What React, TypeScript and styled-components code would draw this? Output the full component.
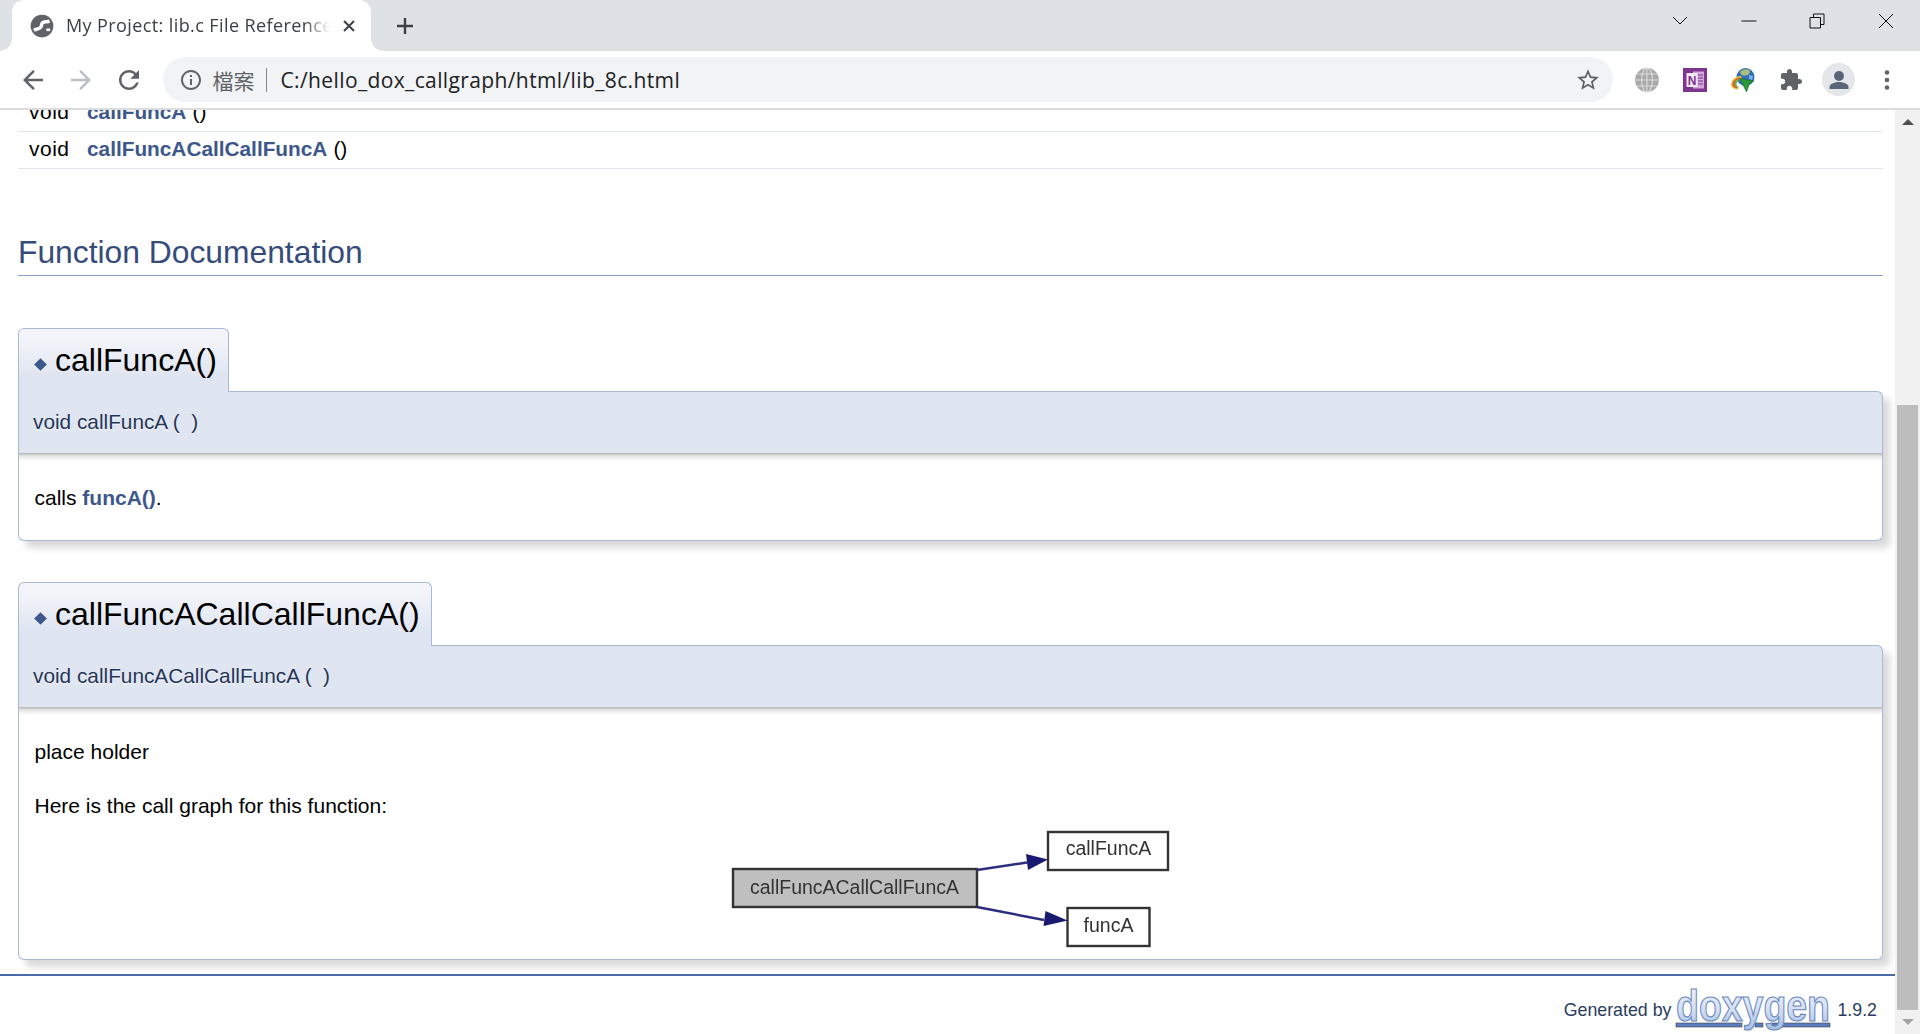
import React from "react";
import styled, { createGlobalStyle } from "styled-components";

const GlobalStyle = createGlobalStyle`
  html, body {
    margin: 0;
    padding: 0;
    height: 100%;
    overflow: hidden;
    background: #fff;
  }
  #root {
    height: 100%;
  }
`;

const docFont = `"Liberation Sans", Arial, sans-serif`;
const chromeFont = `"Open Sans", "Noto Sans CJK TC", sans-serif`;

const App = () => {
  return (
    <Page>
      <GlobalStyle />
      <TabStrip>
        <Tab>
          <Favicon viewBox="0 0 24 24">
            <circle cx="12" cy="12" r="10.500" fill="#5f6368" />
            <path d="M19 7.500c-2.500 1-5 0-6.500 1.500s-.5 3-2 4.500-3.500 1-6 2.500" fill="none" stroke="#fff" strokeWidth="3.200" />
            <path d="M16 15.500l3.500 0" fill="none" stroke="#fff" strokeWidth="2.400" />
          </Favicon>
          <TabTitle>My Project: lib.c File Reference</TabTitle>
          <TabClose viewBox="0 0 14 14">
            <path d="M2 2l10 10M12 2L2 12" />
          </TabClose>
        </Tab>
        <NewTab viewBox="0 0 20 20">
          <path d="M10 2v16M2 10h16" />
        </NewTab>
        <StripSpacer />
        <WindowButton>
          <svg width="16" height="16" viewBox="0 0 16 16">
            <path d="M1 4l7 7 7-7" />
          </svg>
        </WindowButton>
        <WindowButton>
          <svg width="16" height="16" viewBox="0 0 16 16">
            <path d="M0.5 8h15" />
          </svg>
        </WindowButton>
        <WindowButton>
          <svg width="16" height="16" viewBox="0 0 16 16">
            <path d="M1 4.500h10.500v10.500H1zM4.500 4.500V1H15v10.500h-3.500" />
          </svg>
        </WindowButton>
        <WindowButton>
          <svg width="16" height="16" viewBox="0 0 16 16">
            <path d="M1 1l14 14M15 1L1 15" />
          </svg>
        </WindowButton>
      </TabStrip>

      <Toolbar>
        <NavIcon viewBox="0 0 24 24">
          <path d="M20 11H7.830l5.590-5.590L12 4l-8 8 8 8 1.410-1.410L7.830 13H20v-2z" />
        </NavIcon>
        <NavIcon viewBox="0 0 24 24" $dim>
          <path d="M12 4l-1.410 1.410L16.170 11H4v2h12.170l-5.580 5.590L12 20l8-8z" />
        </NavIcon>
        <NavIcon viewBox="0 0 24 24">
          <path d="M17.650 6.350C16.200 4.900 14.210 4 12 4c-4.420 0-7.990 3.580-7.990 8s3.570 8 7.990 8c3.730 0 6.840-2.550 7.730-6h-2.080c-.82 2.330-3.040 4-5.650 4-3.310 0-6-2.690-6-6s2.690-6 6-6c1.660 0 3.140.69 4.220 1.780L13 11h7V4l-2.350 2.350z" />
        </NavIcon>
        <AddressBar>
          <InfoIcon viewBox="0 0 24 24">
            <path d="M11 7h2v2h-2zm0 4h2v6h-2zm1-9C6.480 2 2 6.480 2 12s4.480 10 10 10 10-4.480 10-10S17.520 2 12 2zm0 18c-4.410 0-8-3.590-8-8s3.590-8 8-8 8 3.590 8 8-3.590 8-8 8z" />
          </InfoIcon>
          <Scheme>檔案</Scheme>
          <SchemeDivider />
          <Url>C:/hello_dox_callgraph/html/lib_8c.html</Url>
          <StarIcon viewBox="0 0 24 24">
            <path d="M22 9.240l-7.190-.62L12 2 9.190 8.630 2 9.240l5.460 4.730L5.820 21 12 17.270 18.180 21l-1.630-7.030L22 9.240zM12 15.400l-3.760 2.270 1-4.280-3.320-2.880 4.380-.38L12 6.100l1.710 4.040 4.380.38-3.320 2.880 1 4.280L12 15.400z" />
          </StarIcon>
        </AddressBar>
        <Extensions>
          <ExtensionSlot>
            <svg width="26" height="26" viewBox="0 0 24 24">
              <circle cx="12" cy="12" r="11" fill="#a9a9a9" />
              <g fill="none" stroke="#dcdcdc" strokeWidth="1">
                <ellipse cx="12" cy="12" rx="5" ry="11" />
                <path d="M12 1v22M1 12h22M2.600 6.500h18.800M2.600 17.500h18.800" />
              </g>
            </svg>
          </ExtensionSlot>
          <ExtensionSlot>
            <svg width="24" height="24" viewBox="0 0 24 24">
              <rect width="24" height="24" fill="#80338f" />
              <rect x="10" y="3.500" width="11" height="17" fill="#cfa9d8" />
              <path d="M15 7h5M15 10h5M15 13h5M15 16h5" stroke="#80338f" strokeWidth="1.200" />
              <rect x="3.500" y="5" width="11" height="14" fill="#f3e9f5" />
              <OneNoteGlyph x="9" y="16.500">N</OneNoteGlyph>
            </svg>
          </ExtensionSlot>
          <ExtensionSlot>
            <svg width="26" height="26" viewBox="0 0 26 26">
              <circle cx="15.500" cy="10" r="9" fill="#2f6fb8" />
              <path d="M10 5c2-3 7-3.500 9-2s0 5-3 5.500-5 0-6-3.500z" fill="#a9bd78" />
              <path d="M19 8l4 1-1 4-3-1z" fill="#7fb0e0" />
              <path d="M1 18c0-5 4-9 10-9l1 2.500c-4 0-6.500 2.500-6.500 5 0 2 1.500 3.500 3.500 4l-1 2c-4-.5-7-2-7-4.500z" fill="#e8c43a" />
              <path d="M2.500 17.500c0-3.500 3-6.500 8-7l.5 1c-3.500.5-6.500 2.500-6.500 5.500 0 1.500 1 3 3 3.500l-.5 1c-2.500-.5-4.500-2-4.500-4z" fill="#d9542c" />
              <path d="M4.500 17c0-3 3-4.500 6-5l.5 1c-2.500.5-4.500 2-4.500 4 0 1.500.5 2.500 2 3l-.5.5c-2-.5-3.500-2-3.500-3.500z" fill="#5bb04a" />
              <path d="M10 11.500l14 2.500-4.500 2.500-3 8.500z" fill="#2d9a35" stroke="#17641e" strokeWidth=".6" />
            </svg>
          </ExtensionSlot>
          <ExtensionSlot>
            <svg width="24" height="24" viewBox="0 0 24 24" fill="#5f6368">
              <path d="M20.500 11H19V7c0-1.100-.9-2-2-2h-4V3.500C13 2.120 11.880 1 10.500 1S8 2.120 8 3.500V5H4c-1.100 0-1.990.9-1.990 2v3.800H3.500c1.490 0 2.700 1.210 2.700 2.700s-1.210 2.700-2.700 2.700H2V20c0 1.100.9 2 2 2h3.800v-1.500c0-1.490 1.210-2.700 2.700-2.700 1.490 0 2.700 1.210 2.700 2.700V22H17c1.100 0 2-.9 2-2v-4h1.500c1.380 0 2.500-1.120 2.500-2.500S21.880 11 20.500 11z" />
            </svg>
          </ExtensionSlot>
          <ExtensionSlot>
            <Avatar>
              <svg width="24" height="24" viewBox="0 0 24 24" fill="#5a6478">
                <circle cx="12" cy="8" r="5" />
                <path d="M2.500 21v-2c0-3.500 6-5 9.500-5s9.500 1.500 9.500 5v2z" />
              </svg>
            </Avatar>
          </ExtensionSlot>
          <ExtensionSlot>
            <svg width="8" height="24" viewBox="0 0 8 24" fill="#5f6368">
              <circle cx="4" cy="4.500" r="2.300" />
              <circle cx="4" cy="12" r="2.300" />
              <circle cx="4" cy="19.500" r="2.300" />
            </svg>
          </ExtensionSlot>
        </Extensions>
      </Toolbar>

      <Viewport>
        <Content>
          <Inner>
            <MemberList>
              <MemberRow>
                <MemberType>void</MemberType>
                <MemberLink>callFuncA</MemberLink>
                <MemberArgs>()</MemberArgs>
              </MemberRow>
              <MemberRow>
                <MemberType>void</MemberType>
                <MemberLink>callFuncACallCallFuncA</MemberLink>
                <MemberArgs>()</MemberArgs>
              </MemberRow>
            </MemberList>

            <GroupHeader>Function Documentation</GroupHeader>

            <MemTitle>
              <Diamond />
              callFuncA()
            </MemTitle>
            <MemProto>void callFuncA (&nbsp; )</MemProto>
            <MemDoc>
              <DocText>
                calls <DocLink>funcA()</DocLink>.
              </DocText>
            </MemDoc>

            <MemTitle $second>
              <Diamond />
              callFuncACallCallFuncA()
            </MemTitle>
            <MemProto>void callFuncACallCallFuncA (&nbsp; )</MemProto>
            <MemDoc>
              <DocText>place holder</DocText>
              <DocText $gap>Here is the call graph for this function:</DocText>
              <GraphWrap>
                <CallGraph width="440" height="120" viewBox="0 0 440 120">
                  <rect x="3" y="40" width="244" height="38" fill="#bfbfbf" stroke="#333" strokeWidth="2.400" />
                  <GraphLabel x="124.500" y="65" textLength="209" lengthAdjust="spacingAndGlyphs">
                    callFuncACallCallFuncA
                  </GraphLabel>
                  <rect x="318" y="3" width="120" height="38" fill="#fff" stroke="#333" strokeWidth="2.400" />
                  <GraphLabel x="378.500" y="26">callFuncA</GraphLabel>
                  <rect x="337.500" y="79" width="82" height="38" fill="#fff" stroke="#333" strokeWidth="2.400" />
                  <GraphLabel x="378.500" y="103">funcA</GraphLabel>
                  <path d="M247 41L297 33.500" stroke="#2d2d80" strokeWidth="2.400" fill="none" />
                  <path d="M296 25L318 30.500 298 41z" fill="#191970" />
                  <path d="M247 78L314 91" stroke="#2d2d80" strokeWidth="2.400" fill="none" />
                  <path d="M315.500 82L337.500 91.500 313.500 97z" fill="#191970" />
                </CallGraph>
              </GraphWrap>
            </MemDoc>
          </Inner>

          <FooterRule />
          <Footer>
            Generated by
            <DoxygenLogo width="158" height="40" viewBox="0 0 158 40">
              <defs>
                <linearGradient id="doxFill" x1="0" y1="0" x2="0" y2="1">
                  <stop offset="0" stopColor="#f6f8fd" />
                  <stop offset="0.6" stopColor="#d3def1" />
                  <stop offset="1" stopColor="#a5bbe0" />
                </linearGradient>
              </defs>
              <LogoBar x="1" y="33" width="66" height="4" />
              <LogoBar x="80" y="33" width="8" height="4" />
              <LogoBar x="97" y="33" width="58" height="4" />
              <LogoText x="1" y="31" textLength="154" lengthAdjust="spacingAndGlyphs">
                doxygen
              </LogoText>
            </DoxygenLogo>
            1.9.2
          </Footer>
        </Content>

        <ScrollBar>
          <ScrollArrow $up />
          <ScrollTrack />
          <ScrollThumb />
          <ScrollArrow />
        </ScrollBar>
      </Viewport>
    </Page>
  );
};

export default App;

const Page = styled.div`
  width: 1920px;
  height: 1034px;
  display: flex;
  flex-flow: column nowrap;
  overflow: hidden;
  background-color: #fff;
`;

const TabStrip = styled.div`
  height: 51px;
  flex-shrink: 0;
  display: flex;
  flex-flow: row nowrap;
  align-items: flex-end;
  padding-left: 12px;
  background-color: #dee1e6;
`;

const Tab = styled.div`
  position: relative;
  width: 359px;
  height: 51px;
  box-sizing: border-box;
  padding: 0 15px 0 20px;
  display: flex;
  flex-flow: row nowrap;
  align-items: center;
  background-color: #fff;
  border-radius: 12px 12px 0 0;
  &::before,
  &::after {
    content: "";
    position: absolute;
    bottom: 0;
    width: 12px;
    height: 12px;
  }
  &::before {
    left: -12px;
    background: radial-gradient(circle at 0 0, #dee1e6 11.5px, #fff 12px);
  }
  &::after {
    right: -12px;
    background: radial-gradient(circle at 100% 0, #dee1e6 11.5px, #fff 12px);
  }
`;

const Favicon = styled.svg`
  width: 26px;
  height: 26px;
  margin-left: -3px;
  flex-shrink: 0;
`;

const TabTitle = styled.span`
  margin: 0 0 2px 11px;
  flex: 1;
  overflow: hidden;
  white-space: nowrap;
  font-family: ${chromeFont};
  font-size: 18px;
  letter-spacing: 0.4px;
  color: #3c4043;
  -webkit-mask-image: linear-gradient(to right, #000 90%, transparent 100%);
  mask-image: linear-gradient(to right, #000 90%, transparent 100%);
`;

const TabClose = styled.svg`
  width: 14px;
  height: 14px;
  margin-left: 12px;
  flex-shrink: 0;
  stroke: #3c4043;
  stroke-width: 2;
  fill: none;
`;

const NewTab = styled.svg`
  width: 20px;
  height: 20px;
  margin: 0 0 15px 24px;
  stroke: #3c4043;
  stroke-width: 2.4;
  fill: none;
`;

const StripSpacer = styled.div`
  flex: 1;
`;

const WindowButton = styled.div`
  width: 68.5px;
  height: 42px;
  align-self: flex-start;
  display: flex;
  justify-content: center;
  align-items: center;
  svg {
    fill: none;
    stroke: #111;
    stroke-width: 1;
  }
`;

const Toolbar = styled.div`
  height: 59px;
  flex-shrink: 0;
  box-sizing: border-box;
  padding: 6px 0 2px 15px;
  display: flex;
  flex-flow: row nowrap;
  align-items: flex-start;
  background-color: #fff;
  border-bottom: 2px solid #dcdcdc;
`;

const NavIcon = styled.svg<{ $dim?: boolean }>`
  width: 30px;
  height: 30px;
  margin: 7.5px 15px 0 3px;
  flex-shrink: 0;
  fill: ${(props) => (props.$dim ? "#bcbfc3" : "#5f6368")};
`;

const AddressBar = styled.div`
  width: 1450px;
  height: 45px;
  margin-left: 3.5px;
  flex-shrink: 0;
  box-sizing: border-box;
  padding: 0 12px 0 16px;
  display: flex;
  flex-flow: row nowrap;
  align-items: center;
  background-color: #f1f3f4;
  border-radius: 23px;
`;

const InfoIcon = styled.svg`
  width: 24px;
  height: 24px;
  flex-shrink: 0;
  fill: #5f6368;
`;

const Scheme = styled.span`
  margin-left: 10px;
  font-family: "Noto Sans CJK TC", sans-serif;
  font-size: 21px;
  color: #5f6368;
`;

const SchemeDivider = styled.span`
  width: 1px;
  height: 24px;
  margin: 0 14px 0 11px;
  background-color: #80868b;
`;

const Url = styled.span`
  flex: 1;
  font-family: ${chromeFont};
  font-size: 21px;
  letter-spacing: 0.38px;
  color: #202124;
  white-space: nowrap;
`;

const StarIcon = styled.svg`
  width: 26px;
  height: 26px;
  flex-shrink: 0;
  fill: #5f6368;
`;

const Extensions = styled.div`
  margin-left: 10px;
  display: flex;
  flex-flow: row nowrap;
`;

const ExtensionSlot = styled.div`
  width: 48px;
  height: 45px;
  display: flex;
  justify-content: center;
  align-items: center;
`;

const OneNoteGlyph = styled.text`
  font-family: ${docFont};
  font-size: 12px;
  font-weight: bold;
  text-anchor: middle;
  fill: #80338f;
`;

const Avatar = styled.div`
  width: 33px;
  height: 33px;
  display: flex;
  justify-content: center;
  align-items: center;
  background-color: #e4e6ea;
  border-radius: 50%;
`;

const Viewport = styled.div`
  flex: 1;
  min-height: 0;
  display: flex;
  flex-flow: row nowrap;
`;

const Content = styled.div`
  flex: 1;
  min-width: 0;
  display: flex;
  flex-flow: column nowrap;
  overflow: hidden;
  font-family: ${docFont};
  font-size: 21px;
  color: #000;
`;

const Inner = styled.div`
  margin-top: -15px;
  padding: 0 12px 0 18px;
`;

const MemberList = styled.div`
  display: flex;
  flex-flow: column nowrap;
`;

const MemberRow = styled.div`
  height: 37px;
  box-sizing: border-box;
  padding: 0 0 2px 11px;
  display: flex;
  flex-flow: row nowrap;
  align-items: center;
  gap: 6px;
  border-bottom: 1px solid #dee4f0;
`;

const MemberType = styled.span`
  width: 52px;
  letter-spacing: 0.5px;
`;

const MemberLink = styled.a`
  font-size: 20.8px;
  font-weight: bold;
  color: #3d578c;
`;

const MemberArgs = styled.span``;

const GroupHeader = styled.h2`
  height: 46px;
  margin: 60px 0 0;
  font-size: 31.8px;
  font-weight: normal;
  line-height: 46px;
  color: #354c7b;
  border-bottom: 1px solid #879ecb;
`;

const MemTitle = styled.div<{ $second?: boolean }>`
  position: relative;
  z-index: 1;
  width: fit-content;
  height: 64px;
  margin-top: ${(props) => (props.$second ? "41px" : "52px")};
  margin-bottom: -1px;
  box-sizing: border-box;
  padding: 0 11px 0 15px;
  display: flex;
  flex-flow: row nowrap;
  align-items: center;
  gap: 10px;
  font-size: 32px;
  color: #000;
  background-image: linear-gradient(to bottom, #f5f6fb 0%, #f0f2f8 25%, #dfe5f1 75%, #dfe5f1 100%);
  border: 1px solid #a8b8d9;
  border-bottom: none;
  border-radius: 6px 6px 0 0;
`;

const Diamond = styled.span`
  width: 9px;
  height: 9px;
  margin: 7px 0 0 2px;
  background-color: #3d578c;
  transform: rotate(45deg);
`;

const MemProto = styled.div`
  height: 62px;
  box-sizing: border-box;
  padding: 0 0 2px 14px;
  display: flex;
  align-items: center;
  white-space: pre;
  font-size: 20.8px;
  color: #253555;
  text-shadow: 0 1px 1px rgba(255, 255, 255, 0.9);
  background-color: #dfe5f1;
  border: 1px solid #a8b8d9;
  border-bottom: none;
  border-radius: 0 6px 0 0;
  box-shadow: 7px 7px 7px rgba(0, 0, 0, 0.15);
`;

const MemDoc = styled.div`
  padding: 29px 15px 10px 15.5px;
  background-image: linear-gradient(to bottom, #b4b4b4 0, #e6e6e6 3px, #fff 8px);
  border: 1px solid #a8b8d9;
  border-top: none;
  border-radius: 0 0 6px 6px;
  box-shadow: 7px 7px 7px rgba(0, 0, 0, 0.15);
`;

const DocText = styled.p<{ $gap?: boolean }>`
  margin: ${(props) => (props.$gap ? "22px" : "0")} 0 0;
  line-height: 32px;
  & + & {
    margin-bottom: 7px;
  }
  &:only-child {
    margin-bottom: 16px;
  }
`;

const DocLink = styled.a`
  font-weight: bold;
  color: #3d578c;
`;

const GraphWrap = styled.div`
  display: flex;
  justify-content: center;
  padding-right: 2px;
`;

const CallGraph = styled.svg`
  display: block;
  filter: blur(0.35px);
`;

const GraphLabel = styled.text`
  font-family: ${docFont};
  font-size: 19.5px;
  text-anchor: middle;
  fill: #333;
`;

const FooterRule = styled.div`
  height: 2px;
  margin-top: 14px;
  flex-shrink: 0;
  background-color: #4a6aaa;
`;

const Footer = styled.div`
  padding: 14px 18px 0 0;
  display: flex;
  flex-flow: row nowrap;
  justify-content: flex-end;
  align-items: center;
  gap: 4px;
  font-size: 17.8px;
  color: #2a3d61;
`;

const DoxygenLogo = styled.svg`
  display: block;
  flex-shrink: 0;
  overflow: visible;
`;

const LogoBar = styled.rect`
  fill: #5b7ec0;
  stroke: #444;
  stroke-width: 0.6;
`;

const LogoText = styled.text`
  font-family: ${docFont};
  font-size: 44px;
  font-weight: bold;
  fill: url(#doxFill);
  stroke: #6a8ac2;
  stroke-width: 1.2;
`;

const ScrollBar = styled.div`
  width: 25px;
  flex-shrink: 0;
  display: flex;
  flex-flow: column nowrap;
  align-items: center;
  background-color: #f1f1f1;
`;

const ScrollArrow = styled.div<{ $up?: boolean }>`
  height: 24px;
  flex-shrink: 0;
  display: flex;
  align-items: center;
  &::before {
    content: "";
    border-left: 6px solid transparent;
    border-right: 6px solid transparent;
    ${(props) =>
      props.$up ? "border-bottom: 6px solid #505050;" : "border-top: 6px solid #a3a3a3;"}
  }
`;

const ScrollTrack = styled.div`
  height: 271px;
  flex-shrink: 0;
`;

const ScrollThumb = styled.div`
  flex: 1;
  width: 21px;
  background-color: #bdbdbd;
`;
